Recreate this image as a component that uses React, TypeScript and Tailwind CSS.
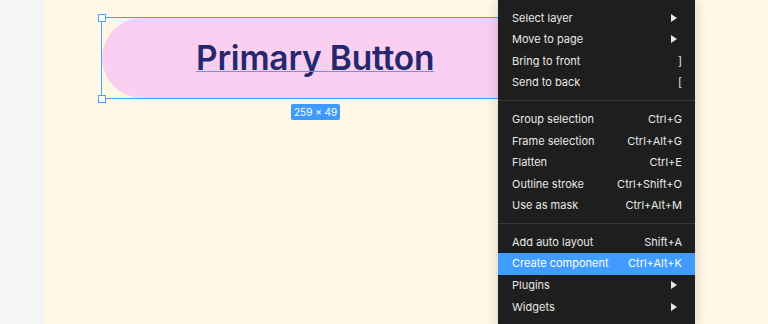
import React from 'react';

type Item =
  | { kind: 'item'; label: string; shortcut?: string; submenu?: boolean; active?: boolean }
  | { kind: 'sep' };

const MENU: Item[] = [
  { kind: 'item', label: 'Select layer', submenu: true },
  { kind: 'item', label: 'Move to page', submenu: true },
  { kind: 'item', label: 'Bring to front', shortcut: ']' },
  { kind: 'item', label: 'Send to back', shortcut: '[' },
  { kind: 'sep' },
  { kind: 'item', label: 'Group selection', shortcut: 'Ctrl+G' },
  { kind: 'item', label: 'Frame selection', shortcut: 'Ctrl+Alt+G' },
  { kind: 'item', label: 'Flatten', shortcut: 'Ctrl+E' },
  { kind: 'item', label: 'Outline stroke', shortcut: 'Ctrl+Shift+O' },
  { kind: 'item', label: 'Use as mask', shortcut: 'Ctrl+Alt+M' },
  { kind: 'sep' },
  { kind: 'item', label: 'Add auto layout', shortcut: 'Shift+A' },
  { kind: 'item', label: 'Create component', shortcut: 'Ctrl+Alt+K', active: true },
  { kind: 'item', label: 'Plugins', submenu: true },
  { kind: 'item', label: 'Widgets', submenu: true },
];

const Arrow = () => (
  <svg width="6" height="8" viewBox="0 0 6 8" className="mr-[5px]">
    <path d="M0 0 L6 4 L0 8 Z" fill="currentColor" />
  </svg>
);

const Handle = ({ className }: { className: string }) => (
  <div className={`absolute w-[8px] h-[8px] bg-white border border-[#4aa0ff] ${className}`} />
);

export default function App() {
  return (
    <div
      className="relative w-[768px] h-[324px] overflow-hidden flex bg-[#fff8e6]"
      style={{ fontFamily: 'Inter, "Noto Sans", sans-serif' }}
    >
      {/* left panel edge */}
      <div className="w-[44px] h-full bg-[#f5f5f5] shrink-0" />

      {/* canvas */}
      <div className="relative flex-1">
        {/* selected button */}
        <div className="absolute left-[57px] top-[17px] w-[420px] h-[82px]">
          <div className="absolute left-[1px] top-[1px] right-0 bottom-[1px] bg-[#fbcff2] rounded-l-[40px] flex items-center pl-[94px]">
            <span className="relative text-[33.5px] font-semibold text-[#26286f] leading-none tracking-[-0.2px] mt-[1px]">
              Primary Button
              <span className="absolute left-0 right-0 bottom-[3px] h-[1.5px] bg-[#4aa0ff]" />
            </span>
          </div>
          <div className="absolute left-0 top-0 w-[399px] h-[82px] border-[1.5px] border-[#4aa0ff]" />
          <Handle className="left-[-3.5px] top-[-3.5px]" />
          <Handle className="left-[-3.5px] bottom-[-3.5px]" />
        </div>

        {/* dimension badge */}
        <div className="absolute left-[247px] top-[104px] h-[16px] px-[3px] rounded-[2px] bg-[#3d9bff] text-white text-[10px] leading-[16px]">
          259 × 49
        </div>

        {/* context menu */}
        <div className="absolute left-[454px] top-[-1px] w-[197px] bg-[#1e1e1e] pt-[8px] pb-[8px] shadow-[0_2px_12px_rgba(0,0,0,0.18)] text-[11px] text-[#e8e8e8]">
          {MENU.map((it, i) =>
            it.kind === 'sep' ? (
              <div key={i} className="py-[7px]">
                <div className="h-[1px] bg-[#383838]" />
              </div>
            ) : (
              <div
                key={i}
                className={`h-[21.6px] flex items-center justify-between pl-[14px] pr-[13px] ${
                  it.active ? 'bg-[#409cff] text-white' : ''
                }`}
              >
                <span>{it.label}</span>
                {it.submenu ? <Arrow /> : <span>{it.shortcut}</span>}
              </div>
            )
          )}
        </div>
      </div>
    </div>
  );
}
